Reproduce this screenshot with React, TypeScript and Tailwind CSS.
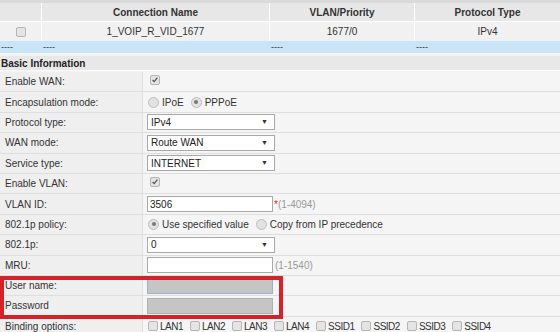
import React from "react";

const font = { fontFamily: '"Liberation Sans", Arial, sans-serif' };

function Check({ checked = false }: { checked?: boolean }) {
  return (
    <span className="relative inline-block w-[10px] h-[10px] border border-[#b5b5b5] bg-[#e4e4e4] rounded-[2px] shrink-0">
      {checked && (
        <svg viewBox="0 0 10 10" className="absolute left-0 top-0 w-[8px] h-[8px]">
          <path d="M2 5 L4 7 L8 2" stroke="#555" strokeWidth="1.6" fill="none" />
        </svg>
      )}
    </span>
  );
}

function Radio({ checked = false }: { checked?: boolean }) {
  return (
    <span className="relative inline-flex items-center justify-center w-[11px] h-[11px] rounded-full border border-[#bdbdbd] bg-[#e2e2e2] shrink-0">
      {checked && <span className="w-[4px] h-[4px] rounded-full bg-[#777]" />}
    </span>
  );
}

function Select({ value }: { value: string }) {
  return (
    <div className="w-[128px] h-[16px] bg-white border border-[#a9a9a9] flex items-center justify-between pl-[3px] pr-[6px] text-[10px] text-[#222]">
      <span>{value}</span>
      <span className="text-[7px] text-[#333]">▼</span>
    </div>
  );
}

function Row({ label, children }: { label: string; children?: React.ReactNode }) {
  return (
    <div className="flex h-[20.4px] border-b border-[#dedede]">
      <div className="w-[143px] shrink-0 bg-[#efefef] border-r border-[#e2e2e2] flex items-center pl-[5px] text-[10px] text-[#333]">
        {label}
      </div>
      <div className="flex-1 bg-[#f5f5f5] flex items-center pl-[4px] text-[10px] text-[#333]">{children}</div>
    </div>
  );
}

export default function App() {
  const bind = ["LAN1", "LAN2", "LAN3", "LAN4", "SSID1", "SSID2", "SSID3", "SSID4"];
  return (
    <div className="relative w-[560px] h-[332px] overflow-hidden bg-white" style={font}>
      <div className="h-[3px] bg-[#d9d9d9]" />
      {/* header */}
      <div className="flex h-[19px] bg-[#e7e7e7] border-b border-white text-[10px] font-bold text-[#333]">
        <div className="w-[42px] border-r border-white" />
        <div className="w-[228px] border-r border-white flex items-center justify-center">Connection Name</div>
        <div className="w-[145px] border-r border-white flex items-center justify-center">VLAN/Priority</div>
        <div className="flex-1 flex items-center justify-center">Protocol Type</div>
      </div>
      <div className="flex h-[19px] bg-[#f1f1f1] text-[10px] text-[#333]">
        <div className="w-[42px] border-r border-white flex items-center justify-center">
          <Check />
        </div>
        <div className="w-[228px] border-r border-white flex items-center justify-center">1_VOIP_R_VID_1677</div>
        <div className="w-[145px] border-r border-white flex items-center justify-center">1677/0</div>
        <div className="flex-1 flex items-center justify-center">IPv4</div>
      </div>
      <div className="flex h-[12px] bg-[#c9e3f7] text-[9px] leading-[13px] text-[#333]">
        <div className="w-[42px] pl-[1px]">----</div>
        <div className="w-[228px] pl-[1px]">----</div>
        <div className="w-[145px] pl-[1px]">----</div>
        <div className="flex-1 pl-[1px]">----</div>
      </div>
      <div className="h-[3px] bg-[#f3f3f3]" />
      <div className="h-[15px] bg-[#e8e8e8] flex items-center pl-[1px] text-[10px] font-bold text-[#222] border-b border-white">
        Basic Information
      </div>
      <div className="h-[1px] bg-[#f3f3f3]" />
      <Row label="Enable WAN:">
        <span className="ml-[3px]"><Check checked /></span>
      </Row>
      <Row label="Encapsulation mode:">
        <span className="ml-[1px] flex items-center gap-[3px]">
          <Radio /> <span>IPoE</span>
          <span className="ml-[1px]" />
          <Radio checked /> <span>PPPoE</span>
        </span>
      </Row>
      <Row label="Protocol type:">
        <Select value="IPv4" />
      </Row>
      <Row label="WAN mode:">
        <Select value="Route WAN" />
      </Row>
      <Row label="Service type:">
        <Select value="INTERNET" />
      </Row>
      <Row label="Enable VLAN:">
        <span className="ml-[3px]"><Check checked /></span>
      </Row>
      <Row label="VLAN ID:">
        <div className="w-[126px] h-[16px] bg-white border border-[#a9a9a9] flex items-center pl-[2px] text-[10px] text-[#222]">3506</div>
        <span className="text-[#e03030] ml-[1px]">*</span>
        <span className="text-[#999]">(1-4094)</span>
      </Row>
      <Row label="802.1p policy:">
        <span className="ml-[1px] flex items-center gap-[3px]">
          <Radio checked /> <span>Use specified value</span>
          <span className="ml-[1px]" />
          <Radio /> <span>Copy from IP precedence</span>
        </span>
      </Row>
      <Row label="802.1p:">
        <Select value="0" />
      </Row>
      <Row label="MRU:">
        <div className="w-[126px] h-[16px] bg-white border border-[#a9a9a9]" />
        <span className="text-[#999] ml-[2px]">(1-1540)</span>
      </Row>
      <Row label="User name:">
        <div className="w-[126px] h-[16px] bg-[#c5c5c5] border border-[#9fb0c4]" />
      </Row>
      <Row label="Password">
        <div className="w-[126px] h-[16px] bg-[#c5c5c5] border border-[#b0b0b0]" />
      </Row>
      <Row label="Binding options:">
        <div className="flex items-center ml-[1px] text-[10px] tracking-[-0.5px]">
          {bind.map((b) => (
            <span key={b} className="flex items-center gap-[2px] mr-[7px]">
              <Check />
              <span>{b}</span>
            </span>
          ))}
        </div>
      </Row>
      {/* red highlight box */}
      <div className="absolute left-0 top-[276px] w-[283px] h-[43px] border-[4px] border-[#d2232a]" />
    </div>
  );
}
